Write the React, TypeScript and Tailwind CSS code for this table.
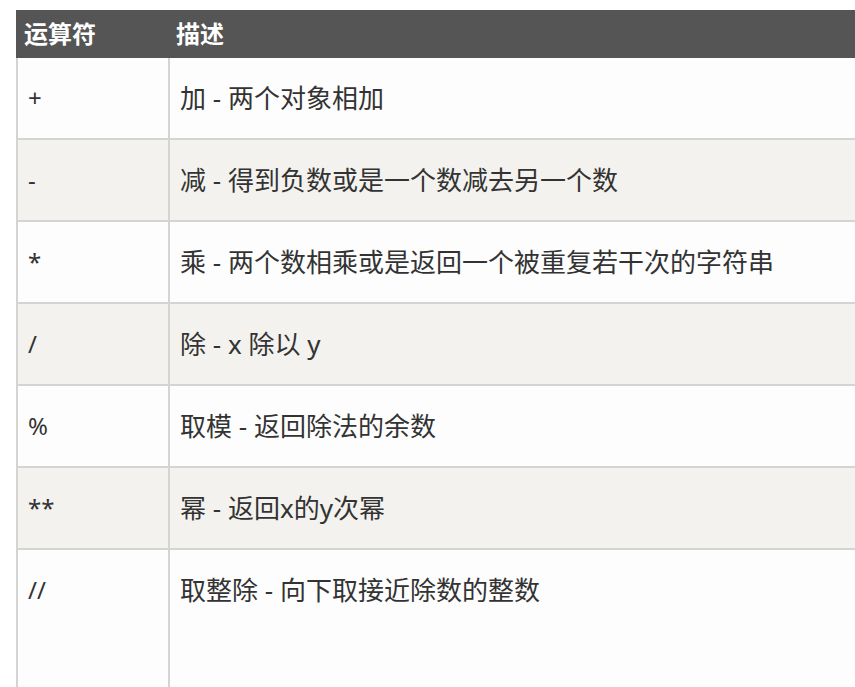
const rows = [
  { op: "+", desc: "加 - 两个对象相加" },
  { op: "-", desc: "减 - 得到负数或是一个数减去另一个数" },
  { op: "*", desc: "乘 - 两个数相乘或是返回一个被重复若干次的字符串" },
  { op: "/", desc: "除 - x 除以 y" },
  { op: "%", desc: "取模 - 返回除法的余数" },
  { op: "**", desc: "幂 - 返回x的y次幂" },
  { op: "//", desc: "取整除 - 向下取接近除数的整数" },
];

function Row({ op, desc, i, last }: { op: string; desc: string; i: number; last: boolean }) {
  const bg = i % 2 === 1 ? "bg-[#f3f2ef]" : "bg-[#fdfdfd]";
  const cell = last
    ? "flex items-start pt-[22px] h-[160px]"
    : "flex items-center h-[80px]";
  return (
    <div className={`flex ${bg} ${last ? "" : "border-b-2 border-[#d4d4d4]"}`}>
      <div className={`${cell} w-[152px] shrink-0 pl-[10px] border-r-2 border-[#d4d4d4] text-[24px]`}>{op}</div>
      <div className={`${cell} flex-1 pl-[10px]`}>{desc}</div>
    </div>
  );
}

export default function App() {
  return (
    <div className="w-[855px] h-[687px] overflow-hidden bg-white pt-[10px] pl-4 font-['Noto_Sans','Noto_Sans_CJK_SC',sans-serif]">
      <div className="w-[880px]">
        <div className="flex h-[48px] items-center bg-[#555555] text-white font-bold text-[24px] leading-[30px]">
          <div className="w-[154px] shrink-0 pl-[8px]">运算符</div>
          <div className="flex-1 pl-[6px]">描述</div>
        </div>
        <div className="border-l-2 border-[#d4d4d4] text-[#333333] text-[26px] leading-[36px]">
          {rows.map((r, i) => (
            <Row key={r.op} op={r.op} desc={r.desc} i={i} last={i === rows.length - 1} />
          ))}
        </div>
      </div>
    </div>
  );
}
